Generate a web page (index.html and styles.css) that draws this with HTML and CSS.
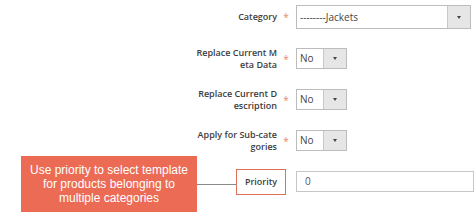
FILE: index.html
```html
<!DOCTYPE html>
<html lang="en">
<head>
    <meta charset="UTF-8">
    <title>Category Template Settings</title>
    <link rel="stylesheet" href="styles.css">
</head>
<body>

<div class="form">
    <div class="row row-first">
        <div class="label">
            <span class="label-text">Category</span>
            <span class="star">*</span>
        </div>
        <div class="control">
            <div class="select select-wide">
                <span class="select-value">--------Jackets</span>
                <span class="select-arrow"></span>
            </div>
        </div>
    </div>

    <div class="row">
        <div class="label">
            <span class="label-text">Replace Current M<br>eta Data</span>
            <span class="star">*</span>
        </div>
        <div class="control">
            <div class="select">
                <span class="select-value">No</span>
                <span class="select-arrow"></span>
            </div>
        </div>
    </div>

    <div class="row">
        <div class="label">
            <span class="label-text">Replace Current D<br>escription</span>
            <span class="star">*</span>
        </div>
        <div class="control">
            <div class="select">
                <span class="select-value">No</span>
                <span class="select-arrow"></span>
            </div>
        </div>
    </div>

    <div class="row">
        <div class="label">
            <span class="label-text">Apply for Sub-cate<br>gories</span>
            <span class="star">*</span>
        </div>
        <div class="control">
            <div class="select">
                <span class="select-value">No</span>
                <span class="select-arrow"></span>
            </div>
        </div>
    </div>

    <div class="row">
        <div class="label label-boxed">
            <span class="label-box">
                Priority
                <!-- callout pointing at the boxed label -->
                <span class="note">Use priority to select template<br>for products belonging to<br>multiple categories</span>
            </span>
        </div>
        <div class="control">
            <div class="input">0</div>
        </div>
    </div>
</div>

</body>
</html>
```

FILE: styles.css
```css
body {
    margin: 0;
    background-color: #fff;
    font-family: "Open Sans", "Liberation Sans", sans-serif;
    color: #303030;
    overflow: hidden;
}

.form {
    display: flex;
    flex-direction: column;
    padding-top: 5px;
}

.row {
    display: flex;
    align-items: center;
    height: 21px;
    margin-bottom: 20px;
}

.row-first {
    height: 24px;
    margin-bottom: 19px;
}

.label {
    width: 296px;
    flex-shrink: 0;
    display: flex;
    justify-content: flex-end;
    align-items: center;
}

.label-text {
    font-size: 9px;
    font-weight: 600;
    line-height: 11.5px;
    text-align: right;
    color: #3d3d3d;
}

.star {
    width: 8px;
    margin: 0 6px 0 5px;
    font-size: 10px;
    color: #e8876a;
    text-align: center;
}

.control {
    flex: 1;
}

.select {
    display: flex;
    width: 51px;
    height: 21px;
    box-sizing: border-box;
    border: 1px solid #bcbcbc;
    background-color: #fff;
}

.select-wide {
    width: 175px;
    height: 24px;
}

.select-value {
    flex: 1;
    padding-left: 3px;
    font-size: 10px;
    line-height: 19px;
    color: #444;
}

.select-wide .select-value {
    line-height: 22px;
}

.select-arrow {
    width: 22px;
    border-left: 1px solid #c8c8c8;
    background-color: #e6e6e6;
    display: flex;
    align-items: center;
    justify-content: center;
}

.select-arrow::after {
    content: "";
    border-left: 2.5px solid transparent;
    border-right: 2.5px solid transparent;
    border-top: 3px solid #444;
}

.input {
    height: 21px;
    box-sizing: border-box;
    border: 1px solid #c6c6c6;
    padding-left: 8px;
    font-size: 10px;
    line-height: 19px;
    color: #555;
}

.label-boxed {
    padding-right: 10px;
    width: 286px;
}

.label-box {
    position: relative;
    width: 50px;
    height: 26px;
    box-sizing: border-box;
    border: 1.5px solid #e0705a;
    font-size: 9px;
    font-weight: 600;
    line-height: 23px;
    text-align: center;
    color: #3d3d3d;
}

.note {
    position: absolute;
    right: 100%;
    top: -14px;
    margin-right: 40px;
    width: 176px;
    height: 56px;
    box-sizing: border-box;
    padding-top: 7px;
    background-color: #ec6b55;
    font-family: "Liberation Sans", Arial, sans-serif;
    font-size: 12px;
    font-weight: normal;
    line-height: 14px;
    text-align: center;
    white-space: nowrap;
    color: #fff;
}

.note::after {
    content: "";
    position: absolute;
    left: 100%;
    top: 28px;
    width: 40px;
    height: 1.5px;
    background-color: #8a8a8a;
}
```
